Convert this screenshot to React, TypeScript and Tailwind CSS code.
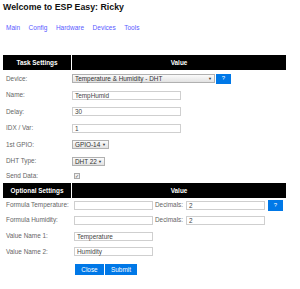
import React from "react";

const font = "font-['Liberation_Sans',Arial,sans-serif]";

function Label({ children }: { children: React.ReactNode }) {
  return <div className="w-[68px] shrink-0 pl-[3px] text-[6.4px] text-[#666]">{children}</div>;
}

function TextInput({ value, w, ml = "ml-[1px]" }: { value?: string; w: string; ml?: string }) {
  return (
    <div className={`${w} ${ml} h-[9px] border border-[#cfcfcf] bg-white pl-[2px] text-[6.4px] leading-[7px] text-[#444]`}>
      {value}
    </div>
  );
}

function Select({ value, w }: { value: string; w: string }) {
  return (
    <div
      className={`${w} ml-[1px] flex h-[9px] items-center justify-between border border-[#b0b0b0] bg-gradient-to-b from-[#fbfbfb] to-[#e2e2e2] px-[2px] text-[6.4px] leading-[7px] text-[#333]`}
    >
      <span>{value}</span>
      <span className="text-[4px]">▼</span>
    </div>
  );
}

function HelpButton({ h = "h-[10px]" }: { h?: string }) {
  return (
    <div className={`ml-[1px] flex w-[15px] ${h} items-center justify-center bg-[#0078e7] text-[6px] text-white`}>?</div>
  );
}

function Header({ title }: { title: string }) {
  return (
    <div className="flex h-[15px] gap-[1px]">
      <div className="flex w-[68px] items-center justify-center bg-black text-[6.4px] font-bold text-white">{title}</div>
      <div className="flex w-[214px] items-center justify-center bg-black text-[6.4px] font-bold text-white">Value</div>
    </div>
  );
}

export default function App() {
  const links = ["Main", "Config", "Hardware", "Devices", "Tools"];

  return (
    <div className={`h-[289px] w-[300px] overflow-hidden bg-white ${font}`}>
      <h1 className="pl-[3px] pt-[2px] text-[8.8px] font-bold leading-[11px] text-[#111]">
        Welcome to ESP Easy: Ricky
      </h1>

      <nav className="mt-[11px] flex gap-[8.5px] pl-[6px] text-[6.5px] leading-[8px] text-[#5a5aff]">
        {links.map((l) => (
          <span key={l}>{l}</span>
        ))}
      </nav>

      <div className="ml-[3px] mt-[23px]">
        <Header title="Task Settings" />

        <div className="flex h-[17px] items-center">
          <Label>Device:</Label>
          <Select value="Temperature & Humidity - DHT" w="w-[143px]" />
          <HelpButton />
        </div>
        <div className="flex h-[16.5px] items-center">
          <Label>Name:</Label>
          <TextInput value="TempHumid" w="w-[109px]" />
        </div>
        <div className="flex h-[16.5px] items-center">
          <Label>Delay:</Label>
          <TextInput value="30" w="w-[109px]" />
        </div>
        <div className="flex h-[16.5px] items-center">
          <Label>IDX / Var:</Label>
          <TextInput value="1" w="w-[109px]" />
        </div>
        <div className="flex h-[16.5px] items-center">
          <Label>1st GPIO:</Label>
          <Select value="GPIO-14" w="w-[37px]" />
        </div>
        <div className="flex h-[16.5px] items-center">
          <Label>DHT Type:</Label>
          <Select value="DHT 22" w="w-[33px]" />
        </div>
        <div className="flex h-[13.5px] items-center">
          <Label>Send Data:</Label>
          <div className="ml-[3px] flex h-[6px] w-[6px] items-center justify-center border border-[#aaa] bg-[#f0f0f0] text-[5px] leading-none text-[#555]">
            ✓
          </div>
        </div>

        <Header title="Optional Settings" />

        <div className="flex h-[14px] items-center">
          <Label>Formula Temperature:</Label>
          <TextInput w="w-[79px]" ml="ml-[3px]" />
          <span className="ml-[2px] w-[31px] text-[6.4px] text-[#666]">Decimals:</span>
          <TextInput value="2" w="w-[79px]" ml="ml-0" />
          <div className="ml-[2px] flex">
            <HelpButton h="h-[11px]" />
          </div>
        </div>
        <div className="flex h-[16px] items-center">
          <Label>Formula Humidity:</Label>
          <TextInput w="w-[79px]" ml="ml-[3px]" />
          <span className="ml-[2px] w-[31px] text-[6.4px] text-[#666]">Decimals:</span>
          <TextInput value="2" w="w-[79px]" ml="ml-0" />
        </div>
        <div className="flex h-[16px] items-center">
          <Label>Value Name 1:</Label>
          <TextInput value="Temperature" w="w-[79px]" ml="ml-[3px]" />
        </div>
        <div className="flex h-[15px] items-center">
          <Label>Value Name 2:</Label>
          <TextInput value="Humidity" w="w-[79px]" ml="ml-[3px]" />
        </div>

        <div className="ml-[72px] mt-[5px] flex gap-[1px]">
          <div className="flex h-[11px] w-[29px] items-center justify-center bg-[#0078e7] text-[6.4px] text-white">Close</div>
          <div className="flex h-[11px] w-[32px] items-center justify-center bg-[#0078e7] text-[6.4px] text-white">Submit</div>
        </div>
      </div>
    </div>
  );
}
